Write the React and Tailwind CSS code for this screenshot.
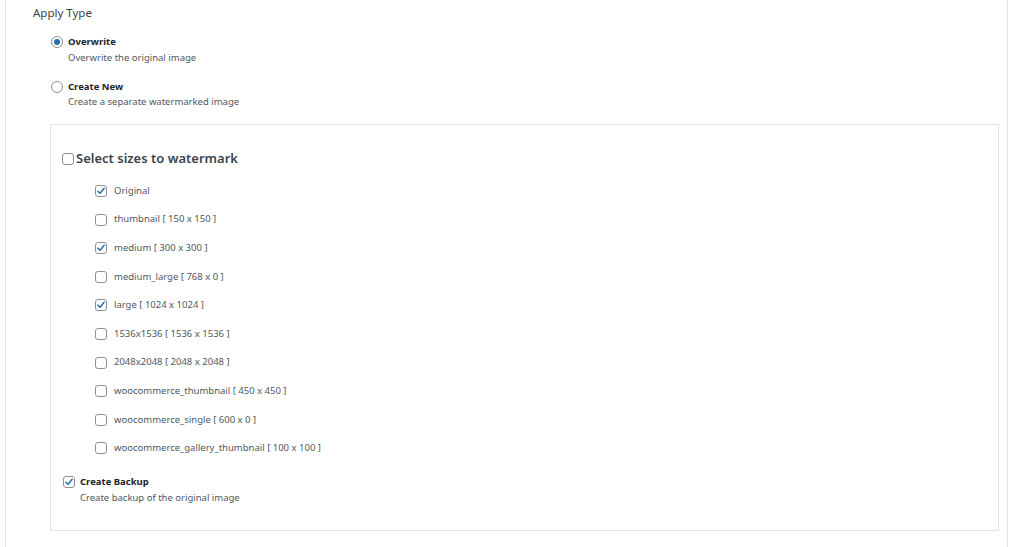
import React from "react";

const sizes = [
  { label: "Original", checked: true },
  { label: "thumbnail [ 150 x 150 ]", checked: false },
  { label: "medium [ 300 x 300 ]", checked: true },
  { label: "medium_large [ 768 x 0 ]", checked: false },
  { label: "large [ 1024 x 1024 ]", checked: true },
  { label: "1536x1536 [ 1536 x 1536 ]", checked: false },
  { label: "2048x2048 [ 2048 x 2048 ]", checked: false },
  { label: "woocommerce_thumbnail [ 450 x 450 ]", checked: false },
  { label: "woocommerce_single [ 600 x 0 ]", checked: false },
  { label: "woocommerce_gallery_thumbnail [ 100 x 100 ]", checked: false },
];

function Checkbox({ checked }) {
  return (
    <span className="w-[12px] h-[12px] shrink-0 rounded-[3px] border border-[#8c8f94] bg-white flex items-center justify-center">
      {checked && (
        <svg viewBox="0 0 12 12" className="w-[10px] h-[10px]">
          <path d="M2.2 6.2 L4.8 8.8 L9.8 2.8" fill="none" stroke="#2271b1" strokeWidth="1.8" strokeLinecap="round" strokeLinejoin="round" />
        </svg>
      )}
    </span>
  );
}

function Radio({ checked }) {
  return (
    <span className="w-[12px] h-[12px] shrink-0 rounded-full border border-[#8c8f94] bg-white flex items-center justify-center">
      {checked && <span className="w-[6px] h-[6px] rounded-full bg-[#2271b1]" />}
    </span>
  );
}

export default function App() {
  return (
    <div className="min-h-[547px] bg-white font-['Noto_Sans',sans-serif] text-[#3c434a] overflow-hidden">
      <div className="ml-[5px] w-[1003px] h-[547px] border-l border-r border-[#e2e4e7] pl-[27px] pt-[3px]">
        <h3 className="text-[11.5px] leading-[20px] text-[#3c434a]">Apply Type</h3>

        {/* apply type radios */}
        <div className="ml-[18px] mt-[12px] flex flex-col gap-[15px]">
          <div>
            <div className="flex items-center gap-[5px] h-[14px]">
              <Radio checked />
              <span className="text-[9.5px] font-bold text-[#1d2327]">Overwrite</span>
            </div>
            <p className="ml-[17px] mt-[2px] text-[9.5px] leading-[14px] text-[#50575e]">Overwrite the original image</p>
          </div>
          <div>
            <div className="flex items-center gap-[5px] h-[14px]">
              <Radio />
              <span className="text-[9.5px] font-bold text-[#1d2327]">Create New</span>
            </div>
            <p className="ml-[17px] mt-[1px] text-[9.5px] leading-[14px] text-[#50575e]">Create a separate watermarked image</p>
          </div>
        </div>

        {/* sizes box */}
        <div className="ml-[17px] mt-[15px] w-[949px] h-[407px] border border-[#e2e4e7] pl-[11px] pt-[24px]">
          <div className="flex items-center gap-[2px] h-[20px]">
            <Checkbox />
            <span className="text-[13px] font-semibold text-[#3c434a]">Select sizes to watermark</span>
          </div>

          <div className="ml-[33px] mt-[15px] flex flex-col gap-[14.6px]">
            {sizes.map((s) => (
              <div key={s.label} className="flex items-center gap-[7px] h-[14px]">
                <Checkbox checked={s.checked} />
                <span className="text-[9.5px] text-[#50575e]">{s.label}</span>
              </div>
            ))}
          </div>

          <div className="ml-[1px] mt-[20px]">
            <div className="flex items-center gap-[5px] h-[14px]">
              <Checkbox checked />
              <span className="text-[9.5px] font-bold text-[#1d2327]">Create Backup</span>
            </div>
            <p className="ml-[17px] mt-[2px] text-[9.5px] leading-[14px] text-[#50575e]">Create backup of the original image</p>
          </div>
        </div>
      </div>
    </div>
  );
}
